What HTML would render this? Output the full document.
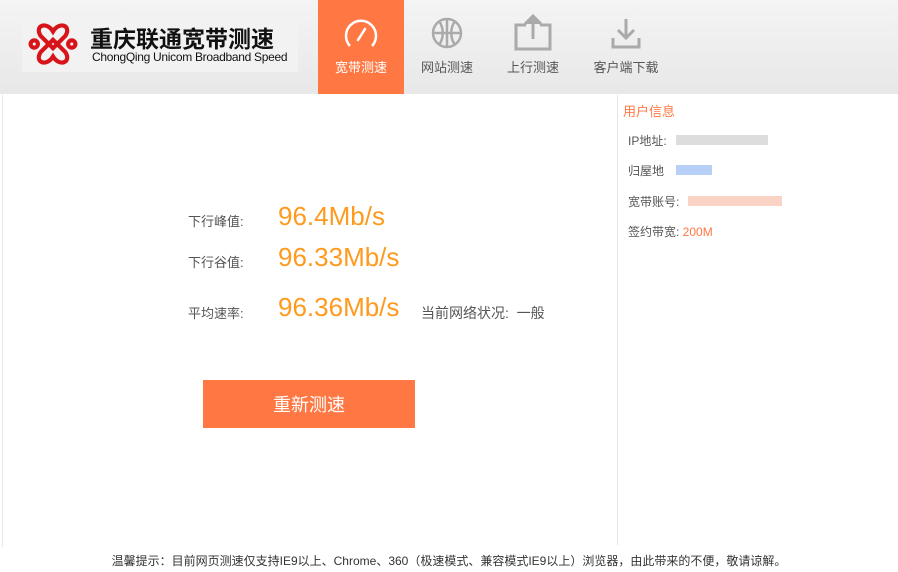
<!DOCTYPE html>
<html><head><meta charset="utf-8"><style>
*{margin:0;padding:0;box-sizing:border-box}
body{width:898px;height:572px;overflow:hidden;background:#fff;font-family:"Liberation Sans","Noto Sans CJK SC",sans-serif;position:relative}
.hdr{position:absolute;left:0;top:0;width:898px;height:94px;background:linear-gradient(#f4f4f4,#e8e8e8)}
.logo{position:absolute;left:22px;top:14px;width:276px;height:58px;background:#f2f2f2}
.t1{position:absolute;left:68px;top:6px;font-size:23px;font-weight:bold;color:#111;white-space:nowrap}
.t2{position:absolute;left:70px;top:36px;font-size:12px;color:#111;white-space:nowrap;letter-spacing:-0.3px}
.tab{position:absolute;top:0;height:94px;text-align:center;font-size:13px;color:#555}
.tab span{position:absolute;left:0;right:0;top:57px}
.tab svg{position:absolute;left:50%;transform:translateX(-50%);top:16px}
.main{position:absolute;left:2px;top:95px;width:896px;height:452px;border-left:1px solid #e6e6e6}
.side{position:absolute;left:617px;top:95px;width:1px;height:450px;background:#e6e6e6}
.lab{position:absolute;font-size:13px;color:#555}
.val{position:absolute;font-size:26px;color:#ff9a1e}
.ui{position:absolute;font-size:12px;color:#555}
.blur{position:absolute;height:10px}
</style></head><body>
<div class="hdr">
 <div class="logo">
  <svg style="position:absolute;left:5px;top:5px" width="52" height="50" viewBox="0 0 48 48" fill="none" stroke="#d7141a" stroke-width="4">
   <path d="M24 12 C18 2 6 6 12 16 L24 28 L36 16 C42 6 30 2 24 12Z"/>
   <path d="M24 36 C18 46 6 42 12 32 L24 20 L36 32 C42 42 30 46 24 36Z"/>
   <circle cx="6" cy="24" r="3.5"/><circle cx="42" cy="24" r="3.5"/>
  </svg>
  <div class="t1">重庆联通宽带测速</div>
  <div class="t2">ChongQing Unicom Broadband Speed</div>
 </div>
 <div class="tab" style="left:318px;width:86px;background:#ff7843;color:#fff">
  <svg width="36" height="34" viewBox="0 0 36 34" fill="none" stroke="#fff" stroke-width="2.5"><path d="M7 30 A15 15 0 1 1 29 30"/><path d="M15 24 L22 13" stroke-linecap="round"/></svg>
  <span>宽带测速</span></div>
 <div class="tab" style="left:404px;width:86px">
  <svg width="34" height="34" viewBox="0 0 34 34" fill="none" stroke="#aaa" stroke-width="2.5"><circle cx="17" cy="17" r="14"/><path d="M17 3V31M3 17H31M9 5C14 12 14 22 9 29M25 5C20 12 20 22 25 29"/></svg>
  <span>网站测速</span></div>
 <div class="tab" style="left:490px;width:86px">
  <svg width="40" height="38" viewBox="0 0 40 38" fill="none" stroke="#aaa" stroke-width="3" style="top:13px"><path d="M13 12H3V36H37V12H27"/><path d="M20 26V3M12 11L20 3L28 11" fill="#aaa"/></svg>
  <span>上行测速</span></div>
 <div class="tab" style="left:576px;width:100px">
  <svg width="34" height="34" viewBox="0 0 34 34" fill="none" stroke="#aaa" stroke-width="3"><path d="M17 3V21M9 14L17 22L25 14M4 22V31H30V22"/></svg>
  <span>客户端下载</span></div>
</div>
<div class="main"></div>
<div class="side"></div>
<div class="lab" style="left:188px;top:211px">下行峰值:</div><div class="val" style="left:278px;top:201px">96.4Mb/s</div>
<div class="lab" style="left:188px;top:252px">下行谷值:</div><div class="val" style="left:278px;top:242px">96.33Mb/s</div>
<div class="lab" style="left:188px;top:303px">平均速率:</div><div class="val" style="left:278px;top:292px">96.36Mb/s</div>
<div class="lab" style="left:421px;top:303px;font-size:14px">当前网络状况: &nbsp;一般</div>
<div style="position:absolute;left:203px;top:380px;width:212px;height:48px;background:#ff7843;color:#fff;font-size:18px;text-align:center;line-height:50px">重新测速</div>
<div style="position:absolute;left:623px;top:101px;font-size:13px;color:#ff7843">用户信息</div>
<div class="ui" style="left:628px;top:132px">IP地址:</div><div class="blur" style="left:676px;top:135px;width:92px;background:#ddd"></div>
<div class="ui" style="left:628px;top:162px">归屋地</div><div class="blur" style="left:676px;top:165px;width:36px;background:#b8cff8"></div>
<div class="ui" style="left:628px;top:193px">宽带账号:</div><div class="blur" style="left:688px;top:196px;width:94px;background:#fbd3c4"></div>
<div class="ui" style="left:628px;top:223px">签约带宽: <span style="color:#ff7843">200M</span></div>
<div style="position:absolute;left:0;width:898px;top:552px;text-align:center;font-size:12px;color:#333">温馨提示：目前网页测速仅支持IE9以上、Chrome、360（极速模式、兼容模式IE9以上）浏览器，由此带来的不便，敬请谅解。</div>
</body></html>
